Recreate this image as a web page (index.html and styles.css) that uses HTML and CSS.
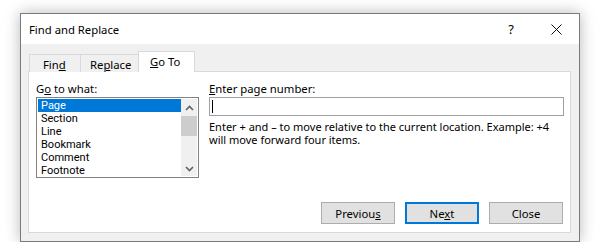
FILE: index.html
```html
<!DOCTYPE html>
<html lang="en">
<head>
    <meta charset="UTF-8">
    <meta name="viewport" content="width=device-width, initial-scale=1.0">
    <title>Find and Replace</title>
    <link rel="stylesheet" href="styles.css">
</head>
<body>
    <div class="window">
        <div class="titlebar">
            <span class="title">Find and Replace</span>
            <span class="help">?</span>
            <span class="close">
                <svg width="11" height="11" viewBox="0 0 11 11">
                    <path d="M0.5 0.5 L10.5 10.5 M10.5 0.5 L0.5 10.5" stroke="#111" stroke-width="1" fill="none"/>
                </svg>
            </span>
        </div>
        <div class="content">
            <div class="tabs">
                <div class="tab">Fin<u>d</u></div>
                <div class="tab">Re<u>p</u>lace</div>
                <div class="tab active"><u>G</u>o To</div>
            </div>
            <div class="panel">
                <div class="columns">
                    <div class="left">
                        <div class="label">G<u>o</u> to what:</div>
                        <div class="listbox">
                            <ul class="items">
                                <li class="selected">Page</li>
                                <li>Section</li>
                                <li>Line</li>
                                <li>Bookmark</li>
                                <li>Comment</li>
                                <li>Footnote</li>
                            </ul>
                            <div class="scrollbar">
                                <svg class="arrow" width="9" height="6" viewBox="0 0 9 6">
                                    <path d="M1 5 L4.5 1.5 L8 5" stroke="#606060" stroke-width="1.6" fill="none"/>
                                </svg>
                                <div class="track"><div class="thumb"></div></div>
                                <svg class="arrow" width="9" height="6" viewBox="0 0 9 6">
                                    <path d="M1 1 L4.5 4.5 L8 1" stroke="#606060" stroke-width="1.6" fill="none"/>
                                </svg>
                            </div>
                        </div>
                    </div>
                    <div class="right">
                        <div class="label"><u>E</u>nter page number:</div>
                        <div class="input"><span class="caret"></span></div>
                        <p class="hint">Enter + and &ndash; to move relative to the current location. Example: +4 will move forward four items.</p>
                    </div>
                </div>
                <div class="buttons">
                    <button>Previou<u>s</u></button>
                    <button class="default">Ne<u>x</u>t</button>
                    <button>Close</button>
                </div>
            </div>
        </div>
    </div>
</body>
</html>
```

FILE: styles.css
```css
body {
    margin: 0;
    padding: 13px 0 0 20px;
    background-color: #fff;
    font-family: "Noto Sans", "DejaVu Sans", sans-serif;
    font-size: 11.3px;
    color: #000;
}

.window {
    width: 560px;
    height: 229px;
    box-sizing: border-box;
    border: 1px solid #7a7a7a;
    background-color: #f0f0f0;
    box-shadow: 0 0 14px rgba(0, 0, 0, 0.28);
    display: flex;
    flex-direction: column;
}

.titlebar {
    height: 30px;
    background-color: #fff;
    display: flex;
    align-items: center;
    padding-left: 8px;
}

.title {
    flex: 1;
}

.help {
    width: 12px;
    text-align: center;
    font-size: 13px;
    margin-right: 34px;
}

.close {
    display: flex;
    margin-right: 17px;
}

.content {
    flex: 1;
    display: flex;
    flex-direction: column;
    padding: 8px 8px 8px 7px;
}

.tabs {
    display: flex;
    align-items: flex-end;
    padding-left: 1px;
    height: 20px;
    position: relative;
    z-index: 1;
    margin-bottom: -1px;
}

.tab {
    height: 18px;
    box-sizing: border-box;
    border: 1px solid #d9d9d9;
    border-bottom: none;
    border-right: none;
    background-color: #f0f0f0;
    line-height: 19px;
}

.tab:nth-child(1) {
    width: 51px;
    padding-left: 13px;
}

.tab:nth-child(2) {
    width: 58px;
    padding-left: 9px;
}

.tab.active {
    width: 57px;
    height: 21px;
    background-color: #fff;
    border-right: 1px solid #d9d9d9;
    padding-left: 11px;
    line-height: 19px;
}

.panel {
    flex: 1;
    background-color: #fff;
    border: 1px solid #d9d9d9;
    display: flex;
    flex-direction: column;
    padding: 9px 6px 8px 7px;
}

.columns {
    display: flex;
    gap: 10px;
}

.left {
    width: 163px;
}

.right {
    flex: 1;
}

.label {
    line-height: 15px;
    margin-bottom: 1px;
}

.listbox {
    height: 81px;
    box-sizing: border-box;
    border: 1px solid #828282;
    display: flex;
    padding: 1px;
}

.items {
    list-style: none;
    margin: 0;
    padding: 0;
    flex: 1;
    font-family: Roboto, "Noto Sans", sans-serif;
    font-size: 11px;
}

.items li {
    line-height: 13px;
    height: 13px;
    padding-left: 3px;
}

.items li.selected {
    background-color: #0078d7;
    color: #fff;
}

.scrollbar {
    width: 16px;
    background-color: #f0f0f0;
    display: flex;
    flex-direction: column;
    align-items: center;
    padding: 6px 0 4px;
}

.track {
    flex: 1;
    width: 100%;
    padding-top: 5px;
}

.thumb {
    height: 20px;
    background-color: #cdcdcd;
}

.input {
    height: 19px;
    box-sizing: border-box;
    border: 1px solid #a0a0a0;
    padding: 2px 0 0 2px;
}

.caret {
    display: block;
    width: 1px;
    height: 13px;
    background-color: #000;
}

.hint {
    margin: 4px 0 0;
    line-height: 13px;
    font-size: 11px;
}

.buttons {
    margin-top: auto;
    display: flex;
    justify-content: flex-end;
    gap: 10px;
    padding-right: 1px;
}

button {
    width: 74px;
    height: 22px;
    box-sizing: border-box;
    border: 1px solid #adadad;
    background-color: #e1e1e1;
    font-family: inherit;
    font-size: 11.3px;
    color: #000;
    padding: 0;
}

button.default {
    border: 2px solid #0078d7;
}
```
